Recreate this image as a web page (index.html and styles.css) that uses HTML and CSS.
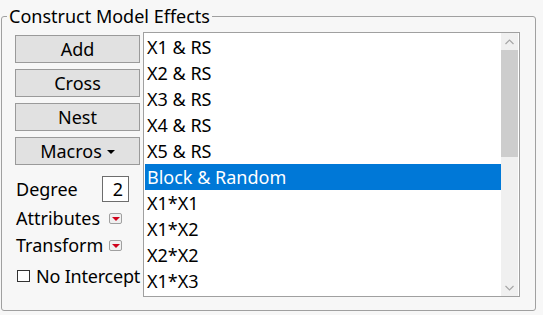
FILE: index.html
```html
<!DOCTYPE html>
<html>
<head>
<meta charset="utf-8">
<link rel="stylesheet" href="styles.css">
</head>
<body>
<fieldset class="panel">
  <legend class="title">Construct Model Effects</legend>
  <div class="content">
    <div class="controls">
      <button class="btn">Add</button>
      <button class="btn">Cross</button>
      <button class="btn">Nest</button>
      <button class="btn">Macros <span class="caret"></span></button>
      <div class="degree">
        <span class="label">Degree</span>
        <span class="numbox">2</span>
      </div>
      <div class="opt first">
        <span class="optlabel">Attributes</span>
        <span class="menuicon"><span class="tri"></span></span>
      </div>
      <div class="opt">
        <span class="optlabel">Transform</span>
        <span class="menuicon"><span class="tri"></span></span>
      </div>
      <label class="check">
        <span class="box"></span>
        <span class="checktext">No Intercept</span>
      </label>
    </div>
    <div class="listbox">
      <div class="rows">
        <div class="row">X1 &amp; RS</div>
        <div class="row">X2 &amp; RS</div>
        <div class="row">X3 &amp; RS</div>
        <div class="row">X4 &amp; RS</div>
        <div class="row">X5 &amp; RS</div>
        <div class="row selected">Block &amp; Random</div>
        <div class="row">X1*X1</div>
        <div class="row">X1*X2</div>
        <div class="row">X2*X2</div>
        <div class="row">X1*X3</div>
      </div>
      <div class="scrollbar">
        <div class="arrow">
          <svg width="9" height="6" viewBox="0 0 9 6"><path d="M0.5 5 L4.5 1 L8.5 5" fill="none" stroke="#a6a6a6" stroke-width="1.2"/></svg>
        </div>
        <div class="thumb"></div>
        <div class="track"></div>
        <div class="arrow">
          <svg width="9" height="6" viewBox="0 0 9 6"><path d="M0.5 1 L4.5 5 L8.5 1" fill="none" stroke="#a6a6a6" stroke-width="1.2"/></svg>
        </div>
      </div>
    </div>
  </div>
</fieldset>
</body>
</html>
```

FILE: styles.css
```css
html, body {
  margin: 0;
  padding: 0;
  background: #f7f7f7;
}
body {
  font-family: "Noto Sans", "Open Sans", sans-serif;
  font-size: 18px;
  color: #000;
  width: 543px;
  height: 315px;
  overflow: hidden;
}
.panel {
  margin: 6px 7px 0 1px;
  padding: 0 15px 13px 13px;
  border: 1px solid #a0a0a0;
  border-radius: 3px;
  height: 305px;
  box-sizing: border-box;
  min-width: 0;
}
.title {
  padding: 0 2px;
  margin-left: -8px;
  line-height: 20px;
}
.content {
  display: flex;
  align-items: flex-start;
  gap: 3px;
  padding-top: 6px;
}
.controls {
  width: 125px;
  flex-shrink: 0;
  display: flex;
  flex-direction: column;
  margin-top: 3px;
}
.btn {
  font: inherit;
  height: 28px;
  width: 125px;
  margin: 0 0 6px 0;
  padding: 0;
  background: #e1e1e1;
  border: 1px solid #9a9a9a;
  color: #000;
  line-height: 24px;
  display: flex;
  align-items: center;
  justify-content: center;
  gap: 5px;
}
.caret {
  display: inline-block;
  width: 0;
  height: 0;
  border-left: 4px solid transparent;
  border-right: 4px solid transparent;
  border-top: 4px solid #000;
  margin-top: 1px;
}
.degree {
  display: flex;
  align-items: center;
  margin-top: 5px;
  height: 26px;
  padding-left: 1px;
}
.label {
  width: 86px;
}
.numbox {
  width: 27px;
  height: 26px;
  box-sizing: border-box;
  border: 1px solid #6d6d6d;
  background: #fff;
  text-align: right;
  padding-right: 5px;
  line-height: 24px;
}
.opt {
  display: flex;
  align-items: center;
  height: 24px;
  padding-left: 1px;
  margin-top: 3px;
}
.opt.first {
  margin-top: 4px;
}
.optlabel {
  width: 93px;
  flex-shrink: 0;
}
.menuicon {
  width: 13px;
  height: 11px;
  flex-shrink: 0;
  box-sizing: border-box;
  border: 1px solid #a0a0a0;
  border-radius: 2px;
  background: #f0f0f0;
  display: flex;
  align-items: center;
  justify-content: center;
}
.tri {
  width: 0;
  height: 0;
  border-left: 4px solid transparent;
  border-right: 4px solid transparent;
  border-top: 4px solid #d0021b;
  margin-top: 1px;
}
.check {
  display: flex;
  align-items: center;
  gap: 6px;
  height: 24px;
  margin-top: 7px;
  padding-left: 2px;
  white-space: nowrap;
}
.box {
  width: 13px;
  height: 12px;
  flex-shrink: 0;
  box-sizing: border-box;
  border: 1px solid #333;
  background: #fff;
}
.checktext {
  letter-spacing: -0.2px;
}
.listbox {
  width: 377px;
  height: 265px;
  flex-shrink: 0;
  box-sizing: border-box;
  border: 1px solid #a0a0a0;
  background: #fff;
  padding: 1px 1px 1px 1px;
  display: flex;
  overflow: hidden;
}
.rows {
  flex: 1;
  min-width: 0;
}
.row {
  height: 26px;
  line-height: 26px;
  padding-left: 2px;
  white-space: nowrap;
}
.row.selected {
  background: #0078d7;
  color: #fff;
}
.scrollbar {
  width: 17px;
  background: #f0f0f0;
  display: flex;
  flex-direction: column;
  margin: -1px 0 -1px 0;
}
.arrow {
  height: 17px;
  display: flex;
  align-items: center;
  justify-content: center;
}
.thumb {
  height: 107px;
  background: #cdcdcd;
}
.track {
  flex: 1;
}
```
